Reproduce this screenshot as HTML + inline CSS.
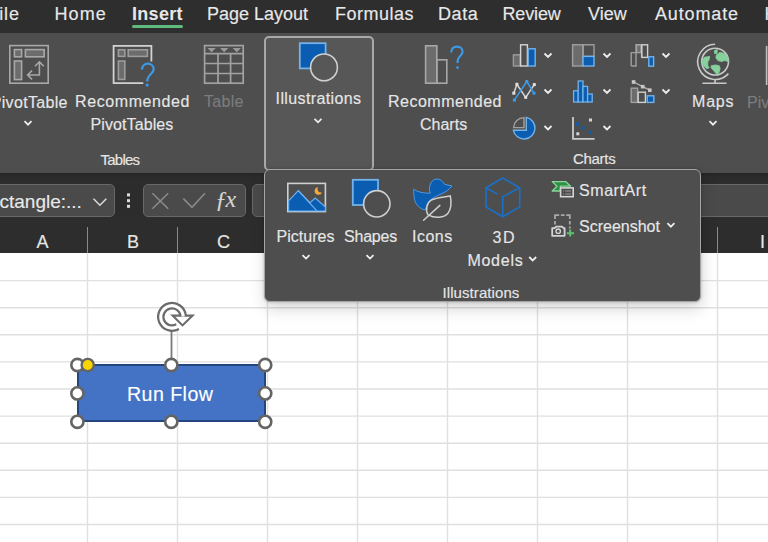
<!DOCTYPE html>
<html><head><meta charset="utf-8">
<style>
*{margin:0;padding:0;box-sizing:border-box}
html,body{width:768px;height:542px;overflow:hidden;background:#fff;font-family:"Liberation Sans",sans-serif}
.a{position:absolute}
.t{position:absolute;white-space:nowrap;line-height:1;-webkit-text-stroke:0.15px currentColor}
#tabs{left:0;top:0;width:768px;height:33px;background:#2e2e2e}
.tab{color:#e8e8e8;font-size:18px;top:5px}
#ribbon{left:0;top:33px;width:768px;height:140px;background:#4e4e4e}
.rt{color:#e6e6e6;font-size:16px}
#fbar{left:0;top:173px;width:768px;height:44px;background:linear-gradient(#262626,#2c2c2c 5px)}
#colh{left:0;top:217px;width:768px;height:36px;background:#2d2d2d}
.ch{color:#e6e6e6;font-size:18px;top:233px}
.vsep{width:1px;background:#8a8a8a;top:227px;height:26px}
svg{position:absolute;overflow:visible}
</style></head><body>

<!-- Tab bar -->
<div id="tabs" class="a"></div>
<div class="t tab" style="left:-0.8px;letter-spacing:0.9px">ile</div>
<div class="t tab" style="left:54.5px;letter-spacing:1.1px">Home</div>
<div class="t tab" style="left:132px;font-weight:bold;letter-spacing:0.3px;-webkit-text-stroke:0">Insert</div>
<div class="a" style="left:132px;top:25px;width:51px;height:3px;border-radius:2px;background:#5fba7d"></div>
<div class="t tab" style="left:207px">Page Layout</div>
<div class="t tab" style="left:335px;letter-spacing:0.5px">Formulas</div>
<div class="t tab" style="left:438px;letter-spacing:0.6px">Data</div>
<div class="t tab" style="left:502.5px;letter-spacing:-0.15px">Review</div>
<div class="t tab" style="left:588px">View</div>
<div class="t tab" style="left:655px;letter-spacing:0.85px">Automate</div>
<div class="t tab" style="left:764.5px">Help</div>

<!-- Ribbon -->
<div id="ribbon" class="a"></div>


<!-- Ribbon content -->
<!-- PivotTable icon -->
<svg style="left:0;top:0" width="768" height="173" viewBox="0 0 768 173">
 <g fill="none" stroke="#a8a8a8" stroke-width="1.6">
  <rect x="9.8" y="45.6" width="38.4" height="37.6"/>
  <rect x="14.4" y="49.6" width="7.2" height="7.2" fill="#6c6c6c"/>
  <rect x="25.4" y="49.6" width="18.8" height="7.2" fill="#6c6c6c"/>
  <rect x="14.4" y="61" width="7.2" height="18.6" fill="#6c6c6c"/>
  <path d="M27.6 75H39.4V61.8M32 70.6l-4.4 4.4 4.4 4.4M35 66.2l4.4-4.4 4.4 4.4"/>
 </g>
 <!-- Recommended PivotTables -->
 <g fill="none" stroke="#d2d2d2" stroke-width="1.8">
  <path d="M143.3 83.2H113.6V45.8H151.4V61.6"/>
 </g>
 <g fill="none" stroke="#9c9c9c" stroke-width="1.6">
  <rect x="118.4" y="49.8" width="6.4" height="6.6" fill="#6c6c6c"/>
  <rect x="128.2" y="49.8" width="19.2" height="6.6" fill="#6c6c6c"/>
  <rect x="118.4" y="61" width="6.4" height="18.4" fill="#6c6c6c"/>
 </g>
 <g fill="none" stroke="#3d9ae6" stroke-width="2.2">
  <path d="M141.8 69.6c0.4-3.8 3-6 5.9-6 3.4 0 6 2.4 6 5.6 0 4.2-5.6 5.2-6.4 10.4v2"/>
 </g>
 <circle cx="147.2" cy="85" r="1.6" fill="#3d9ae6"/>
 <!-- Table (disabled) -->
 <g fill="none" stroke="#a2a2a2" stroke-width="1.7">
  <rect x="204.6" y="45.6" width="38.6" height="37.6"/>
  <path d="M204.6 53.6H243.2M204.6 63.5H243.2M204.6 73.5H243.2M218 53.6V83.2M230.6 53.6V83.2"/>
 </g>
 <g fill="#9a9a9a">
  <path d="M207.4 47.9h8.4l-4.2 4.4z M220 47.9h8.4l-4.2 4.4z M232.6 47.9h8.4l-4.2 4.4z"/>
 </g>
</svg>


<!-- Ribbon texts -->
<div class="t rt" style="left:-9.3px;top:94.5px;letter-spacing:0.33px">PivotTable</div>
<div class="t rt" style="left:75px;top:94px;letter-spacing:0.6px">Recommended</div>
<div class="t rt" style="left:90.5px;top:117px;letter-spacing:0.1px">PivotTables</div>
<div class="t rt" style="left:204px;top:94px;color:#7c7c7c;letter-spacing:0.3px">Table</div>
<div class="t rt" style="left:100.5px;top:152px;font-size:15px;letter-spacing:-0.75px">Tables</div>
<div class="t rt" style="left:388px;top:94px;letter-spacing:0.5px">Recommended</div>
<div class="t rt" style="left:420px;top:117px">Charts</div>
<div class="t rt" style="left:573px;top:151px;font-size:15px;letter-spacing:-0.3px">Charts</div>
<div class="t rt" style="left:692px;top:94px;letter-spacing:0.8px">Maps</div>
<div class="t rt" style="left:747px;top:95px;color:#7c7c7c">PivotChart</div>

<!-- Illustrations button -->
<div class="a" style="left:264px;top:35.5px;width:110px;height:135px;border:2px solid #a8a8a8;border-radius:5px;background:#575757"></div>
<div class="t rt" style="left:275.6px;top:91px;letter-spacing:0.37px">Illustrations</div>

<svg style="left:0;top:0" width="768" height="173" viewBox="0 0 768 173">
 <!-- chevrons -->
 <g fill="none" stroke="#ececec" stroke-width="1.8">
  <path d="M24.5 121.2l3.5 3.5 3.5-3.5"/>
  <path d="M314.5 118.8l3.5 3.5 3.5-3.5"/>
  <path d="M709.5 121.2l3.5 3.5 3.5-3.5"/>
  <path d="M544.5 53.5l3.5 3.5 3.5-3.5M603.5 53.5l3.5 3.5 3.5-3.5M662.5 53.5l3.5 3.5 3.5-3.5"/>
  <path d="M544.5 89.5l3.5 3.5 3.5-3.5M603.5 89.5l3.5 3.5 3.5-3.5M662.5 89.5l3.5 3.5 3.5-3.5"/>
  <path d="M544.5 126l3.5 3.5 3.5-3.5M603.5 126l3.5 3.5 3.5-3.5"/>
 </g>
 <!-- Illustrations icon -->
 <rect x="299.8" y="43.2" width="25.8" height="25.2" fill="#0b5db2" stroke="#74b2e8" stroke-width="1.8"/>
 <circle cx="324" cy="67.4" r="13.4" fill="#575757" stroke="#cfcfcf" stroke-width="1.6"/>
 <!-- Recommended charts -->
 <g stroke="#a8a8a8" stroke-width="1.6">
  <rect x="425.6" y="45.8" width="11.2" height="37.4" fill="#6c6c6c"/>
  <rect x="436.8" y="59.8" width="10" height="23.4" fill="none"/>
 </g>
 <g fill="none" stroke="#3d9ae6" stroke-width="2.2">
  <path d="M451.2 52.4c0-3.6 2.6-5.8 5.8-5.8s5.6 2.2 5.6 5.2c0 3.6-5 4.4-5 9.2v2"/>
 </g>
 <circle cx="457.6" cy="67.6" r="1.4" fill="#3d9ae6"/>
 <!-- column chart -->
 <g stroke-width="1.4">
  <rect x="513.4" y="54.8" width="6.8" height="11.2" fill="#6c6c6c" stroke="#9c9c9c"/>
  <rect x="520.6" y="44.8" width="6.8" height="21.2" fill="none" stroke="#d6d6d6"/>
  <rect x="528.2" y="48.8" width="7" height="17.2" fill="#0b5db2" stroke="#74b2e8"/>
 </g>
 <!-- treemap -->
 <g stroke-width="1.4">
  <rect x="572.6" y="44.8" width="10.4" height="21.2" fill="#6c6c6c" stroke="#a0a0a0"/>
  <rect x="583" y="44.8" width="11" height="11.6" fill="none" stroke="#a0a0a0"/>
  <rect x="583" y="56.4" width="11" height="9.6" fill="#0b5db2" stroke="#74b2e8"/>
 </g>
 <!-- waterfall -->
 <g stroke-width="1.4" fill="none">
  <path d="M631.2 66V52.6H636M636 52.6V44.8H641.6V57.4" stroke="#a0a0a0"/>
  <rect x="636.6" y="45" width="4.4" height="7.6" fill="#6c6c6c" stroke="#a0a0a0"/>
  <rect x="641.8" y="44.8" width="5.8" height="12.6" stroke="#d0d0d0"/>
  <path d="M631.2 66H636V52.6" stroke="#a0a0a0"/>
  <rect x="648.8" y="56.8" width="4.8" height="9.4" fill="#0b5db2" stroke="#74b2e8"/>
 </g>
 <!-- line chart -->
 <g fill="none" stroke-width="1.5">
  <path d="M513.8 93.2L516.9 84.3L525.7 97.3L534.3 84.6" stroke="#d8d8d8"/>
  <path d="M514.4 100.1L526.8 81.5L534 93.2" stroke="#3d9ae6"/>
 </g>
 <g fill="#e0e0e0"><rect x="512.3" y="91.7" width="3" height="3"/><rect x="515.4" y="82.8" width="3" height="3"/><rect x="524.2" y="95.8" width="3" height="3"/><rect x="532.8" y="83.1" width="3" height="3"/></g>
 <g fill="#3d9ae6"><rect x="512.9" y="98.6" width="3" height="3"/><rect x="525.3" y="80" width="3" height="3"/><rect x="532.5" y="91.7" width="3" height="3"/></g>
 <!-- histogram -->
 <g stroke-width="1.3" fill="#0b5db2" stroke="#74b2e8">
  <rect x="573.6" y="90.8" width="4.6" height="11.2"/>
  <rect x="578.2" y="81" width="4.8" height="21"/>
  <rect x="583" y="86.4" width="4.6" height="15.6"/>
  <rect x="587.6" y="94" width="4.6" height="8"/>
 </g>
 <!-- combo -->
 <g stroke-width="1.4">
  <rect x="631.2" y="88.2" width="6.4" height="14.2" fill="#6c6c6c" stroke="#a0a0a0"/>
  <rect x="638.2" y="92.2" width="7.2" height="10.2" fill="none" stroke="#d0d0d0"/>
  <rect x="647.2" y="95.8" width="6.6" height="6.6" fill="#0b5db2" stroke="#74b2e8"/>
  <path d="M633.6 82L642.7 86.7L649.8 90.2" fill="none" stroke="#b0b0b0"/>
 </g>
 <g fill="#c8c8c8"><rect x="631.8" y="80.2" width="3.6" height="3.6"/><rect x="640.9" y="84.9" width="3.6" height="3.6"/><rect x="648" y="88.4" width="3.6" height="3.6"/></g>
 <!-- pie -->
 <path d="M526.3 117.4A10.9 10.9 0 1 1 513.4 130.3H526.3Z" fill="#0b5db2" stroke="#74b2e8" stroke-width="1.4"/>
 <path d="M524 117.6A10.6 10.6 0 0 0 513.6 127.6H524Z" fill="none" stroke="#a0a0a0" stroke-width="1.4"/>
 <!-- scatter -->
 <path d="M573 117V138.9H594.6" fill="none" stroke="#cccccc" stroke-width="1.8"/>
 <g fill="#d4d4d4"><rect x="589" y="118.5" width="3" height="3"/><rect x="576.3" y="132.3" width="3" height="3"/></g>
 <g fill="#0b5db2"><rect x="576" y="122.6" width="3" height="3"/><rect x="581.6" y="126.5" width="3" height="3"/><rect x="588.7" y="130.9" width="3" height="3"/></g>
 <!-- globe -->
 <g fill="none" stroke="#c8c8c8" stroke-width="1.6">
  <circle cx="715.1" cy="61.6" r="13.4"/>
  <path d="M715.1 44.2A17.6 17.6 0 1 0 728.4 73.6"/>
  <path d="M715.1 79.4V83.2M702.4 83.2H726.6"/>
 </g>
 <g fill="#86d19c" stroke="#86d19c" stroke-width="0.8" stroke-linejoin="round">
  <path d="M702 60.5L704.4 57.2L707.8 56.7L709.7 56.2L709.2 59.6L707.8 62L707.8 65.8L709.2 67.8L706.8 68.7L704.4 66.8L702 63.9Z"/>
  <path d="M716.4 54.8L719.8 52.4L724.5 53.4L727.9 57.2L728.4 61.5L724.5 60.6L721.7 61.5L717.8 60.6L715.9 57.7Z"/>
  <path d="M711.1 65.8L715.4 64.9L719.3 65.8L720.2 68.7L718.8 73L716.9 74.5L714 71.1L711.1 67.8Z"/>
  <path d="M714.5 50.5L717.4 49.5L716.9 53.4L714.5 53.4Z"/>
 </g>
 <path d="M766.6 46V85" stroke="#c0c0c0" stroke-width="1.6"/>
</svg>

<!-- Formula bar -->
<div id="fbar" class="a"></div>
<div class="a" style="left:-10px;top:184.4px;width:124.6px;height:32.4px;border:1.3px solid #686868;border-radius:5px;background:#4a4a4a"></div>
<div class="t" style="left:-0.5px;top:192px;font-size:19px;color:#e8e8e8">ctangle:...</div>
<svg style="left:0;top:0" width="768" height="253">
 <path d="M93.5 198.8l6.4 6.4 6.4-6.4" fill="none" stroke="#d8d8d8" stroke-width="1.6"/>
 <g fill="#dcdcdc"><rect x="127" y="193.4" width="3" height="3"/><rect x="127" y="199.2" width="3" height="3"/><rect x="127" y="204.8" width="3" height="3"/></g>
</svg>
<div class="a" style="left:142.6px;top:184.4px;width:103.4px;height:32.4px;border:1.3px solid #686868;border-radius:5px;background:#4a4a4a"></div>
<div class="a" style="left:251.5px;top:184.4px;width:530px;height:32.4px;border:1.3px solid #686868;border-radius:5px;background:#4a4a4a"></div>
<svg style="left:0;top:0" width="768" height="253">
 <path d="M152.4 193.2L168.2 208.8M168.2 193.2L152.4 208.8" fill="none" stroke="#8a8a8a" stroke-width="1.6"/>
 <path d="M183.4 198.6L192 207.4L205 193.2" fill="none" stroke="#8a8a8a" stroke-width="1.6"/>
</svg>
<div class="t" style="left:215px;top:186.5px;font-size:24px;color:#d4d4d4;font-family:'Liberation Serif',serif;font-style:italic;letter-spacing:-1.5px">ƒx</div>

<!-- Column headers -->
<div id="colh" class="a"></div>
<div class="a vsep" style="left:87px"></div>
<div class="a vsep" style="left:177px"></div>
<div class="a vsep" style="left:267px"></div>
<div class="a vsep" style="left:357px"></div>
<div class="a vsep" style="left:447px"></div>
<div class="a vsep" style="left:537px"></div>
<div class="a vsep" style="left:627px"></div>
<div class="a vsep" style="left:717px"></div>
<div class="t ch" style="left:36.5px">A</div>
<div class="t ch" style="left:127px">B</div>
<div class="t ch" style="left:217px">C</div>
<div class="t ch" style="left:307px">D</div>
<div class="t ch" style="left:397px">E</div>
<div class="t ch" style="left:487px">F</div>
<div class="t ch" style="left:577px">G</div>
<div class="t ch" style="left:667px">H</div>
<div class="t ch" style="left:760px">I</div>

<!-- Grid -->
<svg style="left:0;top:0" width="768" height="542"><path d="M87.5 253V542M177.5 253V542M267.5 253V542M357.5 253V542M447.5 253V542M537.5 253V542M627.5 253V542M717.5 253V542M0 280.6H768M0 307.7H768M0 334.8H768M0 361.9H768M0 389.0H768M0 416.1H768M0 443.2H768M0 470.3H768M0 497.4H768M0 524.5H768" stroke="#e0e0e0" stroke-width="1.4" fill="none"/></svg>

<!-- Shape -->
<div class="a" style="left:76.6px;top:364.2px;width:189.2px;height:58.2px;background:#4472c4;border:2px solid #24467e"></div>
<div class="t" style="left:127px;top:385px;font-size:19.6px;letter-spacing:0.45px;color:#ffffff">Run Flow</div>
<svg style="left:0;top:0" width="768" height="542">
 <path d="M171.5 330V358" stroke="#7a7a7a" stroke-width="1.8"/>
 <g fill="#fff" stroke="#646464" stroke-width="2.6">
  <circle cx="77.4" cy="365" r="6.1"/><circle cx="171.3" cy="365" r="6.1"/><circle cx="265.2" cy="365" r="6.1"/>
  <circle cx="77.4" cy="393.4" r="6.1"/><circle cx="265.2" cy="393.4" r="6.1"/>
  <circle cx="77.4" cy="421.8" r="6.1"/><circle cx="171.3" cy="421.8" r="6.1"/><circle cx="265.2" cy="421.8" r="6.1"/>
 </g>
 <circle cx="87.7" cy="365" r="6.1" fill="#fad400" stroke="#646464" stroke-width="2.4"/>
 <!-- rotate handle -->
 <circle cx="172" cy="316.9" r="13" fill="#fff"/>
 <path d="M177.60 326.60A11.2 11.2 0 1 1 183.14 315.73" fill="none" stroke="#6b6b6b" stroke-width="7.6"/>
 <path d="M172.6 315.6H192.6L182.5 325.4Z" fill="#fff" stroke="#6b6b6b" stroke-width="2.1" stroke-linejoin="miter"/>
 <path d="M178.90 325.73A11.2 11.2 0 1 1 183.19 316.51" fill="none" stroke="#ffffff" stroke-width="3.1"/>
</svg>

<!-- Popup -->
<div class="a" style="left:264px;top:169.4px;width:436.6px;height:132.8px;border:1.8px solid #a6a6a6;border-radius:6px;background:#4e4e4e;box-shadow:0 0 3px rgba(0,0,0,0.25),1px 7px 16px rgba(0,0,0,0.16)"></div>
<div class="t rt" style="left:276.6px;top:228.5px">Pictures</div>
<div class="t rt" style="left:344px;top:228.5px;letter-spacing:-0.2px">Shapes</div>
<div class="t rt" style="left:412px;top:228.5px;letter-spacing:0.5px">Icons</div>
<div class="t rt" style="left:492.5px;top:230.3px;letter-spacing:1.5px">3D</div>
<div class="t rt" style="left:467.4px;top:252.6px;letter-spacing:0.75px">Models</div>
<div class="t rt" style="left:579px;top:183px;letter-spacing:0.57px">SmartArt</div>
<div class="t rt" style="left:579px;top:218.8px">Screenshot</div>
<div class="t rt" style="left:442.5px;top:285px;font-size:15px;letter-spacing:0.08px">Illustrations</div>
<svg style="left:0;top:0" width="768" height="542">
 <g fill="none" stroke="#ececec" stroke-width="1.8">
  <path d="M302.5 255.1l3.5 3.5 3.5-3.5M366.5 255.1l3.5 3.5 3.5-3.5M529.2 257l3.5 3.5 3.5-3.5M667.4 223.2l3.5 3.5 3.5-3.5"/>
 </g>
 <!-- pictures -->
 <rect x="287.8" y="183.4" width="37.6" height="28.2" fill="none" stroke="#d0d0d0" stroke-width="1.6"/>
 <path d="M288.6 200.8L298.3 190.7L309.9 202.7L315.3 198.1L325.4 207V211H288.6Z" fill="#0b5db2" stroke="#6ab0f0" stroke-width="1.2"/>
 <path d="M298.3 190.7L316.9 210.9" fill="none" stroke="#6ab0f0" stroke-width="1.2"/>
 <path d="M318.00 187.22A3.8 3.8 0 1 0 322.00 192.22A3.4 3.4 0 0 1 318.00 187.22Z" fill="#f2a83e"/>
 <!-- shapes -->
 <rect x="352.8" y="179.8" width="25.2" height="25.2" fill="#0b5db2" stroke="#74b2e8" stroke-width="1.8"/>
 <circle cx="376.8" cy="203.8" r="13.2" fill="#4e4e4e" stroke="#cfcfcf" stroke-width="1.6"/>
 <!-- icons duck -->
 <path d="M413.8 189.1C417 192 424 193.4 430.4 193.1C429 190.5 429 186.5 430.9 183C432.5 180.2 434.6 179 436.9 179C440 179 442.8 181 444.6 184.4L451.8 185.9C450.6 187.8 448.8 189.6 446.8 190.9C445 192.2 443 193 441 194C436 196.4 430 198.5 427.6 204C426.6 206.4 425.8 208.4 425 210C420 208.8 416 205 414.6 199.8C413.8 196.4 413.6 192.6 413.8 189.1Z" fill="#0b5db2" stroke="#4d9ae6" stroke-width="1"/>
 <path d="M428 214.8C425 210 427 202.6 431.2 200.2C436 197.4 444 197 450.3 195.9C451.5 202 450.8 209.6 447.8 213.6C444 218 435 218.6 428 214.8Z" fill="#4e4e4e" stroke="#d0d0d0" stroke-width="1.5"/>
 <path d="M423.6 220.2L439.9 205.4" fill="none" stroke="#d0d0d0" stroke-width="1.5" stroke-linecap="round"/>
 <!-- 3d cube -->
 <g fill="none" stroke="#1b70c6" stroke-width="1.6" stroke-linejoin="round">
  <path d="M502.7 178L519.7 187.7V207L502.7 216.7L486.1 207V187.7Z"/>
  <path d="M502.7 216.7V196.9L519.7 187.7M486.1 187.7L497.4 194.1"/>
 </g>
 <!-- smartart -->
 <path d="M552.2 181.6H565.6L570.6 186.2H560.4V191H552.2L557 186.2Z" fill="#2f8f47" stroke="#86d896" stroke-width="1.3" stroke-linejoin="round"/>
 <rect x="560.6" y="187.9" width="12.6" height="8.8" fill="#4e4e4e" stroke="#d4d4d4" stroke-width="1.6"/>
 <path d="M563 191H563.8M565.2 191H571M563 194H563.8M565.2 194H571" stroke="#9a9a9a" stroke-width="1.1"/>
 <!-- screenshot -->
 <g fill="none" stroke="#a8a8a8" stroke-width="1.8">
  <path d="M555 219V215.1H559.2M560.9 215.1H564.6M566.3 215.1H569.8V219M555 220.9V224.6M569.8 220.9V224.6M569.8 226.4V228.4"/>
 </g>
 <path d="M552.2 228.2H554.6L556.2 226.6H562L563.6 228.2H564.6V235.8H552.2Z" fill="#4e4e4e" stroke="#d4d4d4" stroke-width="1.8" stroke-linejoin="round"/>
 <circle cx="558.2" cy="231.2" r="2.2" fill="none" stroke="#d4d4d4" stroke-width="1.4"/>
 <path d="M570.2 229.6V236.6M566.8 233.2H574" stroke="#5cc46e" stroke-width="1.9"/>
</svg>

</body></html>
